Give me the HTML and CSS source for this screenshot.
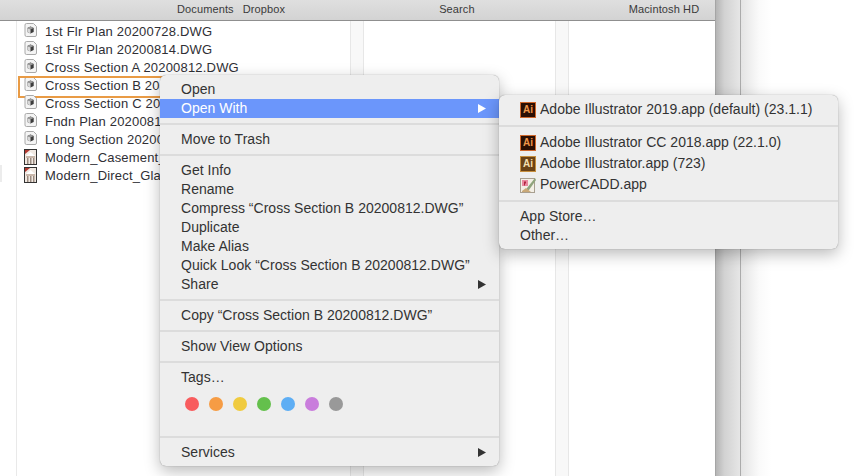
FILE: index.html
```html
<!DOCTYPE html>
<html lang="en">
<head>
<meta charset="utf-8">
<title>Finder context menu</title>
<link rel="stylesheet" href="styles.css">
</head>
<body>
<svg class="defs" width="0" height="0" aria-hidden="true">
  <defs>
    <symbol id="dwg" viewBox="0 0 13 14">
      <path d="M2.5.5h7l3 3v8.5a1.5 1.5 0 0 1-1.5 1.5H2.5A1.5 1.5 0 0 1 1 12V2A1.5 1.5 0 0 1 2.5.5z" fill="#f4f4f4" stroke="#a9a9a9"/>
      <path d="M6.5 3.5l3.2 1.5v4l-3.2 1.5L3.3 9V5z" fill="#3c3c3c"/>
      <path d="M6.5 3.5l3.2 1.5-3.2 1.5L3.3 5z" fill="#9a9a9a"/>
      <path d="M3.3 5l3.2 1.5v4L3.3 9z" fill="#d8d8d8"/>
    </symbol>
    <symbol id="arch" viewBox="0 0 13 16">
      <rect x=".5" y=".5" width="12" height="15" fill="#f1e9e2" stroke="#333"/>
      <path d="M1 1h5L1 5z" fill="#b23a32"/>
      <path d="M2 7l4.500-4L11 7z" fill="#fff"/>
      <rect x="2" y="7" width="9" height="2" fill="#c9b7aa"/>
      <path d="M3 9h1.500v6H3zM6 9h1.500v6H6zM9 9h1.500v6H9z" fill="#9b8b80"/>
    </symbol>
    <symbol id="cad" viewBox="0 0 16 16">
      <rect x=".5" y="1.500" width="14" height="14" fill="#f3efe6" stroke="#a89f90"/>
      <path d="M2 3h6v6H2z" fill="#e98aa0"/>
      <path d="M4 4.500h2v2H5v2H4z" fill="#b3243f"/>
      <path d="M15 1L7 11l-1 3 3-1 7-10z" fill="#8fa37c"/>
      <path d="M2 14l4-3 5 4H2z" fill="#c9a877"/>
    </symbol>
    <symbol id="tri" viewBox="0 0 8 9">
      <path d="M0 0l8 4.500L0 9z"/>
    </symbol>
  </defs>
</svg>

<div class="desk">
  <div class="finder">
    <div class="bar">
      <span class="crumb docs">Documents</span>
      <span class="crumb drop">Dropbox</span>
      <span class="crumb search">Search</span>
      <span class="crumb hd">Macintosh HD</span>
    </div>
    <div class="cols">
      <div class="sidebar-edge"><span class="side-sel"></span></div>
      <ul class="col list">
        <li class="file"><svg class="ficon"><use href="#dwg"/></svg>1st Flr Plan 20200728.DWG</li>
        <li class="file"><svg class="ficon"><use href="#dwg"/></svg>1st Flr Plan 20200814.DWG</li>
        <li class="file"><svg class="ficon"><use href="#dwg"/></svg>Cross Section A 20200812.DWG</li>
        <li class="file sel"><svg class="ficon"><use href="#dwg"/></svg>Cross Section B 20200812.DWG</li>
        <li class="file"><svg class="ficon"><use href="#dwg"/></svg>Cross Section C 20200812.DWG</li>
        <li class="file"><svg class="ficon"><use href="#dwg"/></svg>Fndn Plan 20200812.DWG</li>
        <li class="file"><svg class="ficon"><use href="#dwg"/></svg>Long Section 20200812.DWG</li>
        <li class="file"><svg class="ficon tall"><use href="#arch"/></svg>Modern_Casement_Op.DWG</li>
        <li class="file"><svg class="ficon tall"><use href="#arch"/></svg>Modern_Direct_Glazed.DWG</li>
      </ul>
      <div class="gutter"></div>
      <div class="col mid"></div>
      <div class="gutter"></div>
      <div class="col last"></div>
    </div>
  </div>
  <div class="band"></div>
  <div class="beyond"></div>
</div>

<div class="menu main">
  <div class="item">Open</div>
  <div class="item on">Open With<svg class="tri"><use href="#tri"/></svg></div>
  <div class="sep"></div>
  <div class="item">Move to Trash</div>
  <div class="sep"></div>
  <div class="item">Get Info</div>
  <div class="item">Rename</div>
  <div class="item">Compress “Cross Section B 20200812.DWG”</div>
  <div class="item">Duplicate</div>
  <div class="item">Make Alias</div>
  <div class="item">Quick Look “Cross Section B 20200812.DWG”</div>
  <div class="item">Share<svg class="tri"><use href="#tri"/></svg></div>
  <div class="sep"></div>
  <div class="item">Copy “Cross Section B 20200812.DWG”</div>
  <div class="sep"></div>
  <div class="item">Show View Options</div>
  <div class="sep"></div>
  <div class="item">Tags…</div>
  <div class="tags">
    <span class="tag red"></span>
    <span class="tag orange"></span>
    <span class="tag yellow"></span>
    <span class="tag green"></span>
    <span class="tag blue"></span>
    <span class="tag purple"></span>
    <span class="tag gray"></span>
  </div>
  <div class="sep"></div>
  <div class="item">Services<svg class="tri"><use href="#tri"/></svg></div>
</div>

<div class="menu sub">
  <div class="item app"><span class="ai">Ai</span>Adobe Illustrator 2019.app (default) (23.1.1)</div>
  <div class="sep"></div>
  <div class="item app"><span class="ai">Ai</span>Adobe Illustrator CC 2018.app (22.1.0)</div>
  <div class="item app"><span class="ai old">Ai</span>Adobe Illustrator.app (723)</div>
  <div class="item app"><svg class="cad"><use href="#cad"/></svg>PowerCADD.app</div>
  <div class="sep"></div>
  <div class="item">App Store…</div>
  <div class="item">Other…</div>
</div>
</body>
</html>
```

FILE: styles.css
```css
* { box-sizing: border-box; }
html, body { margin: 0; height: 100%; overflow: hidden; background: #fff; }
body {
  position: relative;
  width: 854px;
  height: 476px;
  font-family: "Liberation Sans", Arial, sans-serif;
  color: #333;
}
.defs { position: absolute; }

.desk { display: flex; height: 476px; }
.finder { width: 715px; display: flex; flex-direction: column; }
.band {
  width: 26px;
  background: linear-gradient(90deg, #b5b5b5 0, #d2d2d2 35%, #e6e6e6 100%);
  border-left: 1px solid #a5a5a5;
  border-right: 1px solid #ababab;
}
.beyond { flex: 1; background: linear-gradient(90deg, #e4e4e4 0, #fafafa 18px, #fff 30px); }

.bar {
  height: 21px;
  flex: none;
  display: flex;
  align-items: center;
  padding-bottom: 3px;
  background: linear-gradient(#dfdfdf, #d3d3d3);
  border-bottom: 1px solid #8f8f8f;
  font-size: 11px;
  color: #3a3a3a;
  letter-spacing: .12px;
}
.crumb { white-space: nowrap; }
.docs { margin-left: 177px; }
.drop { margin-left: 9px; }
.search { margin-left: 154px; }
.hd { margin-left: 154px; }

.cols { flex: 1; display: flex; }
.sidebar-edge {
  width: 17px;
  flex: none;
  background: #fff;
  border-right: 1px solid #e9e9e9;
  position: relative;
}
.side-sel { display: block; width: 2px; height: 17px; margin-top: 144px; background: #ececec; }
.col { margin: 0; padding: 0; list-style: none; }
.list { width: 333px; padding-top: 1px; }
.mid { width: 191px; }
.last { flex: 1; }
.gutter {
  width: 14px;
  flex: none;
  background: #f8f8f8;
  border-left: 1px solid #e7e7e7;
  border-right: 1px solid #e7e7e7;
}

.file {
  height: 18px;
  display: flex;
  align-items: center;
  padding-left: 7px;
  font-size: 13px;
  letter-spacing: .19px;
  color: #2f2f35;
  white-space: nowrap;
  position: relative;
}
.file.sel::after {
  content: "";
  position: absolute;
  left: 1px;
  top: 0;
  width: 150px;
  height: 18px;
  border: 2px solid #e99b45;
}
.ficon { width: 13px; height: 14px; margin-right: 8px; margin-bottom: 2px; flex: none; overflow: visible; }
.ficon.tall { height: 16px; margin-bottom: 0; }

.menu {
  position: absolute;
  background: #eeeeee;
  border-radius: 6px;
  box-shadow: 0 0 1px rgba(0, 0, 0, .45), 0 5px 16px rgba(0, 0, 0, .28);
  font-size: 14px;
  color: #333;
  letter-spacing: .02px;
}
.main { left: 160px; top: 75px; width: 339px; height: 391px; padding: 5px 0 4px; }
.sub { left: 499px; top: 95px; width: 339px; height: 154px; padding: 4px 0; }

.item {
  height: 19px;
  line-height: 19px;
  padding-left: 21px;
  white-space: nowrap;
  position: relative;
}
.sub .item { padding-left: 21px; }
.item.on { background: #6b96fb; color: #fff; }
.item.app { height: 21px; display: flex; align-items: center; }
.sep { height: 12px; position: relative; }
.sep::after {
  content: "";
  position: absolute;
  left: 0;
  right: 0;
  top: 5px;
  height: 2px;
  background: #dcdcdc;
}
.tri { position: absolute; right: 13px; top: 5px; width: 8px; height: 9px; fill: #333; }
.on .tri { fill: #fff; }

.tags { height: 44px; display: flex; gap: 10px; padding: 10px 0 0 25px; }
.tag { width: 14px; height: 14px; border-radius: 50%; }
.red { background: #f85c5e; }
.orange { background: #f69c44; }
.yellow { background: #f0cb3f; }
.green { background: #64c04c; }
.blue { background: #5eaef4; }
.purple { background: #c97ddc; }
.gray { background: #999; }

.ai {
  width: 16px;
  height: 16px;
  margin-right: 4px;
  flex: none;
  display: flex;
  align-items: center;
  justify-content: center;
  background: #2b0f03;
  border: 1px solid #d0682c;
  color: #f0974a;
  font-size: 10px;
  font-weight: 700;
  letter-spacing: 0;
}
.ai.old { background: #6b4316; border-color: #c78f3e; color: #f4dfae; }
.cad { width: 16px; height: 16px; margin-right: 4px; flex: none; }
```
